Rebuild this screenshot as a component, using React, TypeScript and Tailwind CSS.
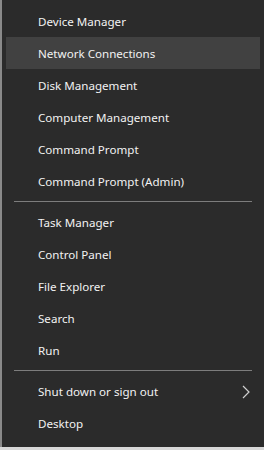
import React from 'react';

type Entry = { label: string; active?: boolean; submenu?: boolean } | 'sep';

const entries: Entry[] = [
  { label: 'Device Manager' },
  { label: 'Network Connections', active: true },
  { label: 'Disk Management' },
  { label: 'Computer Management' },
  { label: 'Command Prompt' },
  { label: 'Command Prompt (Admin)' },
  'sep',
  { label: 'Task Manager' },
  { label: 'Control Panel' },
  { label: 'File Explorer' },
  { label: 'Search' },
  { label: 'Run' },
  'sep',
  { label: 'Shut down or sign out', submenu: true },
  { label: 'Desktop' },
];

export default function App() {
  return (
    <div className="w-[264px] h-[450px] flex flex-col bg-[#d8d8d8]" style={{ fontFamily: '"Noto Sans", "Open Sans", sans-serif' }}>
      <div className="h-[447px] flex flex-col pt-[5px] bg-[#2b2b2b] border-l-2 border-[#8a8a8a]">
        {entries.map((e, i) =>
          e === 'sep' ? (
            <div key={i} className="h-[9px] flex items-center px-[12px]">
              <div className="h-px w-full bg-[#7d7d7d]" />
            </div>
          ) : (
            <div
              key={i}
              className={`h-[32px] mx-[4px] pl-[32px] pr-[10px] pt-px flex items-center justify-between text-[11.6px] text-[#f2f2f2] ${e.active ? 'bg-[#414141]' : ''}`}
            >
              <span>{e.label}</span>
              {e.submenu && (
                <svg width="8" height="14" viewBox="0 0 8 14" fill="none" stroke="#d0d0d0" strokeWidth="1.2">
                  <path d="M1 1l6 6-6 6" />
                </svg>
              )}
            </div>
          )
        )}
      </div>
    </div>
  );
}
